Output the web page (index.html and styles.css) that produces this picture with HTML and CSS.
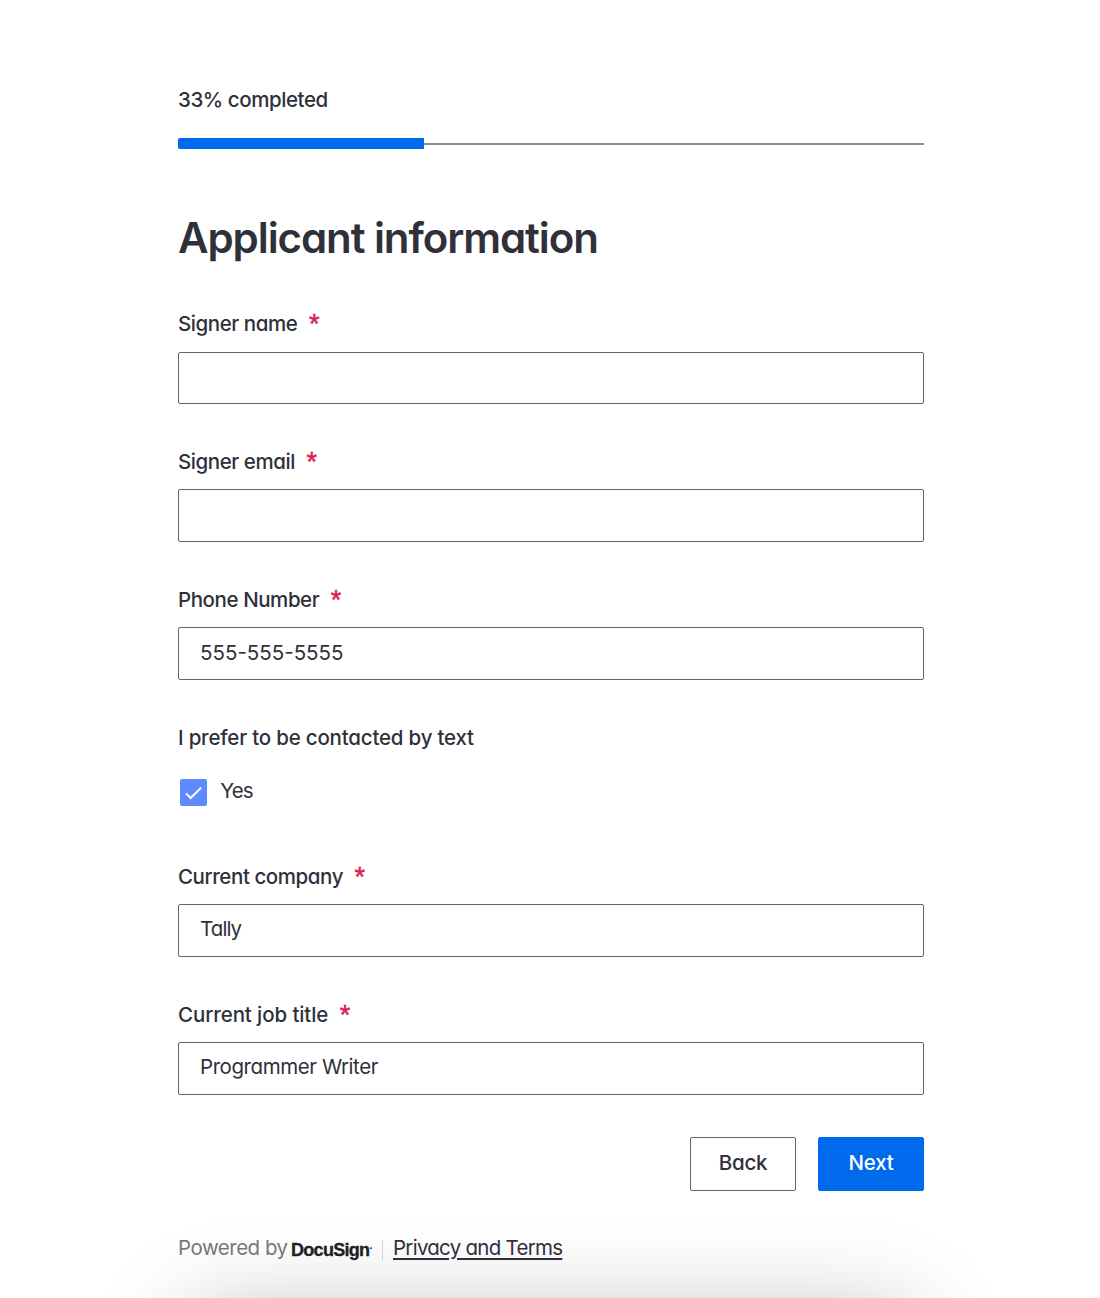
FILE: index.html
```html
<!DOCTYPE html>
<html lang="en">
<head>
<meta charset="utf-8">
<title>Applicant information</title>
<link rel="stylesheet" href="styles.css">
</head>
<body>
<div class="backdrop"><div class="shade"></div></div>
<main class="page">
  <p class="progress-text"><span class="t-progress">33% completed</span></p>
  <div class="progress"><div class="progress-fill" style="width: 33%"></div></div>
  <h1 class="title">Applicant information</h1>
  <form class="form">
    <div class="field">
      <label class="label" for="name"><span class="t-name">Signer name</span><span class="required">*</span></label>
      <div class="input" id="name"></div>
    </div>
    <div class="field">
      <label class="label" for="email"><span class="t-email">Signer email</span><span class="required">*</span></label>
      <div class="input" id="email"></div>
    </div>
    <div class="field">
      <label class="label" for="phone"><span class="t-phone">Phone Number</span><span class="required">*</span></label>
      <div class="input input-phone" id="phone"><span class="v-phone">555-555-5555</span></div>
    </div>
    <div class="field field-check">
      <div class="label label-check"><span class="t-contact">I prefer to be contacted by text</span></div>
      <div class="check-row">
        <svg class="check" viewBox="0 0 27 27"><rect width="27" height="27" rx="2" fill="#5d8bff"/><path d="M6 14.4l4.6 4.6L21.2 8.6" fill="none" stroke="#fff" stroke-width="2"/></svg>
        <span class="v-yes">Yes</span>
      </div>
    </div>
    <div class="field">
      <label class="label" for="company"><span class="t-company">Current company</span><span class="required">*</span></label>
      <div class="input input-company" id="company"><span class="v-company">Tally</span></div>
    </div>
    <div class="field">
      <label class="label" for="job"><span class="t-job">Current job title</span><span class="required">*</span></label>
      <div class="input" id="job"><span class="v-job">Programmer Writer</span></div>
    </div>
  </form>
  <div class="actions">
    <button class="button" type="button">Back</button>
    <button class="button button-primary" type="button">Next</button>
  </div>
  <footer class="footer">
    <span class="powered">Powered by</span>
    <span class="brand">DocuSign<span class="mark">·</span></span>
    <span class="divider"></span>
    <a class="terms" href="#">Privacy and Terms</a>
  </footer>
</main>
</body>
</html>
```
FILE: styles.css
```css
* { box-sizing: border-box; }
body {
  margin: 0;
  height: 1298px;
  position: relative;
  background: #fff;
  color: #30303b;
  font: 500 20.5px/24px Inter, "Liberation Sans", sans-serif;
  font-feature-settings: "cv11";
  letter-spacing: -0.43px;
}
.page { position: relative; width: 746px; margin-left: 178px; padding-top: 88px; white-space: nowrap; }
.progress-text { margin: 0; height: 50px; }
.progress {
  height: 11px;
  background: linear-gradient(#8b8b90, #8b8b90) 0 5px / 100% 2px no-repeat;
}
.progress-fill { height: 10.5px; background: #006aed; border-radius: 2px 0 0 2px; }
.title { margin: 63px 0 0; height: 99.6px; font-size: 42px; line-height: 52px; font-weight: 600; letter-spacing: -1.08px; }
.field { height: 137.8px; }
.field-check { height: 139.4px; }
.label { display: flex; height: 40px; padding-top: 0.4px; line-height: 23px; }
.label-check { line-height: 25px; }
.t-contact { letter-spacing: -0.2px; }
.t-job { letter-spacing: -0.1px; }
.required { margin-left: 11.5px; color: #d92252; font: 400 27px/25px "Liberation Sans", sans-serif; -webkit-text-stroke: 0.5px #d92252; }
.input {
  height: 52.6px;
  padding: 12.3px 21px;
  border: 1px solid #64646c;
  border-radius: 2px;
  background: #fff;
  font-weight: 400;
}
.input-phone { padding-top: 13px; }
.input-company { padding-top: 11.6px; }
.v-phone { letter-spacing: 0; }
.v-yes, .v-company { letter-spacing: -0.9px; }
.v-yes { margin-left: -0.7px; }
.check-row { display: flex; align-items: flex-start; padding: 14px 2px 0; gap: 14px; font-weight: 400; }
.check { width: 27px; height: 27px; }
.actions { display: flex; justify-content: flex-end; gap: 22px; margin-top: -3px; }
.button {
  width: 106px;
  height: 54px;
  padding: 0 0 2px;
  border: 1px solid #64646c;
  border-radius: 2px;
  background: #fff;
  color: inherit;
  font: inherit;
  font-feature-settings: inherit;
  letter-spacing: -0.2px;
}
.button-primary { border-color: #006aed; background: #006aed; color: #fff; }
.footer { display: flex; margin-top: 45px; font-weight: 400; }
.powered { width: 113px; color: #77777d; letter-spacing: -0.5px; }
.brand { width: 91px; color: #202020; font: 700 18px/29px "Liberation Sans", sans-serif; letter-spacing: -0.7px; -webkit-text-stroke: 0.3px #202020; }
.mark { font-size: 10px; line-height: 1; vertical-align: 4px; -webkit-text-stroke: 0; }
.divider { width: 1px; height: 20px; margin: 4px 10px 0 0; background: #d4d4d6; }
.terms { color: inherit; letter-spacing: -0.73px; text-decoration-thickness: 2px; text-underline-offset: 3px; }
.backdrop { position: absolute; inset: 0; overflow: hidden; }
.shade {
  position: absolute;
  left: 190px;
  top: 1320px;
  width: 720px;
  height: 400px;
  box-shadow: 0 0 90px rgba(0, 0, 0, 0.3);
}
```
